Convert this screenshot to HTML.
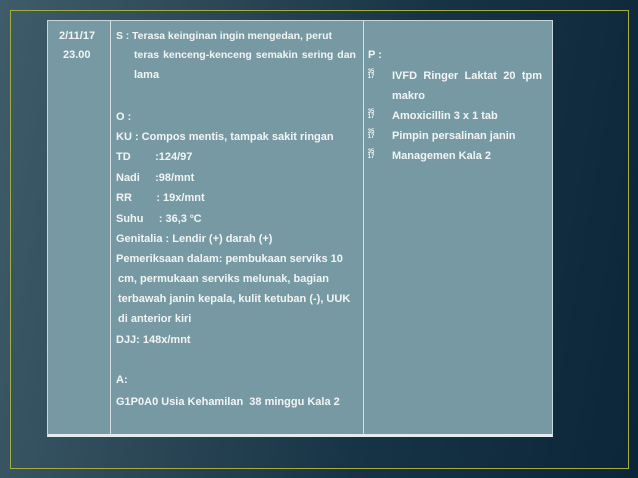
<!DOCTYPE html>
<html><head><meta charset="utf-8">
<style>
html,body{margin:0;padding:0;}
body{width:638px;height:478px;position:relative;overflow:hidden;
background:linear-gradient(100deg,#3f5c6a 0%,#2c4857 30%,#173446 60%,#0b2638 100%);
font-family:"Liberation Sans",sans-serif;}
.frame{position:absolute;left:10px;top:10px;width:619px;height:459px;border:1px solid #a6ad3c;box-sizing:border-box;}
.tbl{position:absolute;left:47px;top:20px;width:506px;height:417px;background:#7799a3;border:1px solid #c9d6da;border-bottom:3px solid #e4ecee;box-sizing:border-box;}
.vl{position:absolute;top:20px;height:415px;width:1px;background:#d6e0e3;}
.t{position:absolute;color:#f3f5f5;font-size:11px;font-weight:bold;white-space:pre;line-height:14px;}
.j{display:flex;justify-content:space-between;}
.s{font-size:10.5px;}
.b{position:absolute;color:#f3f5f5;font-size:6px;font-weight:bold;line-height:5px;width:10px;text-align:center;}
.sup{position:relative;top:-4px;font-size:6px;}
</style></head><body>
<div class="frame"></div>
<div class="tbl"></div>
<div class="vl" style="left:110px"></div>
<div class="vl" style="left:363px"></div>

<div class="t" style="left:59px;top:29px">2/11/17</div>
<div class="t" style="left:63px;top:48px">23.00</div>

<div class="t j s" style="left:116px;top:29px;width:216px"><span>S</span><span>:</span><span>Terasa</span><span>keinginan</span><span>ingin</span><span>mengedan,</span><span>perut</span></div>
<div class="t j s" style="left:134px;top:48px;width:222px"><span>teras</span><span>kenceng-kenceng</span><span>semakin</span><span>sering</span><span>dan</span></div>
<div class="t" style="left:134px;top:68px">lama</div>
<div class="t" style="left:116px;top:110px">O :</div>
<div class="t" style="left:116px;top:130px">KU : Compos mentis, tampak sakit ringan</div>
<div class="t" style="left:116px;top:150px">TD        :124/97</div>
<div class="t" style="left:116px;top:171px">Nadi     :98/mnt</div>
<div class="t" style="left:116px;top:191px">RR        : 19x/mnt</div>
<div class="t" style="left:116px;top:212px">Suhu     : 36,3 <span class="sup">o</span>C</div>
<div class="t" style="left:116px;top:232px">Genitalia : Lendir (+) darah (+)</div>
<div class="t" style="left:116px;top:252px">Pemeriksaan dalam: pembukaan serviks 10</div>
<div class="t" style="left:118px;top:272px">cm, permukaan serviks melunak, bagian</div>
<div class="t" style="left:118px;top:292px">terbawah janin kepala, kulit ketuban (-), UUK</div>
<div class="t" style="left:118px;top:312px">di anterior kiri</div>
<div class="t" style="left:116px;top:333px">DJJ: 148x/mnt</div>
<div class="t" style="left:116px;top:373px">A:</div>
<div class="t" style="left:116px;top:395px">G1P0A0 Usia Kehamilan  38 minggu Kala 2</div>

<div class="t" style="left:368px;top:48px">P :</div>
<div class="b" style="left:366px;top:70px">35<br>17</div>
<div class="t j" style="left:392px;top:69px;width:150px"><span>IVFD</span><span>Ringer</span><span>Laktat</span><span>20</span><span>tpm</span></div>
<div class="t" style="left:392px;top:89px">makro</div>
<div class="b" style="left:366px;top:110px">35<br>17</div>
<div class="t" style="left:392px;top:109px">Amoxicillin 3 x 1 tab</div>
<div class="b" style="left:366px;top:130px">35<br>17</div>
<div class="t" style="left:392px;top:129px">Pimpin persalinan janin</div>
<div class="b" style="left:366px;top:150px">35<br>17</div>
<div class="t" style="left:392px;top:149px">Managemen Kala 2</div>
</body></html>
